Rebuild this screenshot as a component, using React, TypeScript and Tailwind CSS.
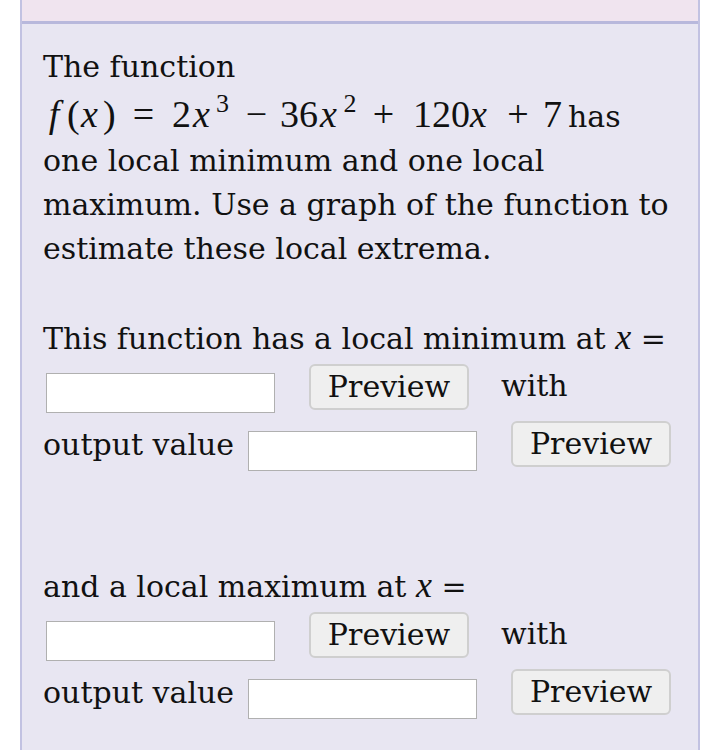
import React from 'react';

const serif = { fontFamily: '"DejaVu Serif", "Liberation Serif", serif' };
const mathFont = { fontFamily: '"Liberation Serif", "Times New Roman", serif' };

function MathX() {
  return (
    <i className="text-[36px]" style={mathFont}>
      x
    </i>
  );
}

function AnswerBox() {
  return <input type="text" className="h-[40px] w-[229px] border border-[#b0b0b0] bg-white" />;
}

function PreviewButton() {
  return (
    <button className="h-[46px] w-[160px] rounded-[6px] border-2 border-[#cfcfcf] bg-[#efefef] text-[30px] leading-[40px] text-[#111]">
      Preview
    </button>
  );
}

function AnswerRows() {
  return (
    <div>
      <div className="flex h-[58px] items-start">
        <div className="ml-[3px] mt-[12px]">
          <AnswerBox />
        </div>
        <div className="ml-[34px] mt-[5px]">
          <PreviewButton />
        </div>
        <span className="ml-[32px] mt-[5px]">with</span>
      </div>
      <div className="flex h-[58px] items-start">
        <span className="mt-[6px]">output value</span>
        <div className="ml-[14px] mt-[12px]">
          <AnswerBox />
        </div>
        <div className="ml-[34px] mt-[4px]">
          <PreviewButton />
        </div>
      </div>
    </div>
  );
}

function Formula() {
  const box = 'inline-block text-center';
  const sup = 'inline-block text-center align-top text-[26px] leading-[30px]';
  return (
    <span className="text-[38px]" style={mathFont}>
      <i className={`${box} ml-[2px] w-[18px]`}>f</i>
      <span className={`${box} ml-[4px] w-[8px]`}>(</span>
      <i className={`${box} ml-[2px] w-[25px]`}>x</i>
      <span className={`${box} ml-[1px] w-[9px]`}>)</span>
      <span className={`${box} ml-[18px] w-[27px]`}>=</span>
      <span className={`${box} ml-[15px] w-[16px]`}>2</span>
      <i className={`${box} w-[27px]`}>x</i>
      <span className={`${sup} w-[15px]`}>3</span>
      <span className={`${box} ml-[13px] w-[27px]`}>−</span>
      <span className={`${box} ml-[10px] w-[37px]`}>36</span>
      <i className={`${box} w-[23px]`}>x</i>
      <span className={`${sup} ml-[3px] w-[14px]`}>2</span>
      <span className={`${box} ml-[13px] w-[27px]`}>+</span>
      <span className={`${box} ml-[16px] w-[54px]`}>120</span>
      <i className={`${box} w-[23px]`}>x</i>
      <span className={`${box} ml-[15px] w-[26px]`}>+</span>
      <span className={`${box} ml-[12px] w-[17px]`}>7</span>
    </span>
  );
}

export default function App() {
  return (
    <div className="h-[750px] w-[720px] bg-white" style={serif}>
      <div className="ml-[20px] flex h-full w-[680px] flex-col border-x-2 border-[#c2c2e2]">
        <div className="h-[24px] border-b-[3px] border-[#b8b8dc] bg-[#f0e4ef]" />
        <div className="flex-1 bg-[#e8e6f2] px-[21px] pt-[21px] text-[30px] leading-[44px] text-[#111]">
          <div>
            <div className="h-[44px]">The function</div>
            <div className="h-[50px] leading-[50px] whitespace-nowrap">
              <Formula />
              <span className="ml-[8px]">has</span>
            </div>
            <div className="h-[44px]">one local minimum and one local</div>
            <div className="h-[44px]">maximum. Use a graph of the function to</div>
            <div className="h-[44px]">estimate these local extrema.</div>
          </div>
          <div className="mt-[44px]">
            <div className="h-[44px] whitespace-nowrap">
              This function has a local minimum at <MathX /> =
            </div>
            <AnswerRows />
          </div>
          <div className="mt-[88px]">
            <div className="h-[44px] whitespace-nowrap">
              and a local maximum at <MathX /> =
            </div>
            <AnswerRows />
          </div>
        </div>
      </div>
    </div>
  );
}
